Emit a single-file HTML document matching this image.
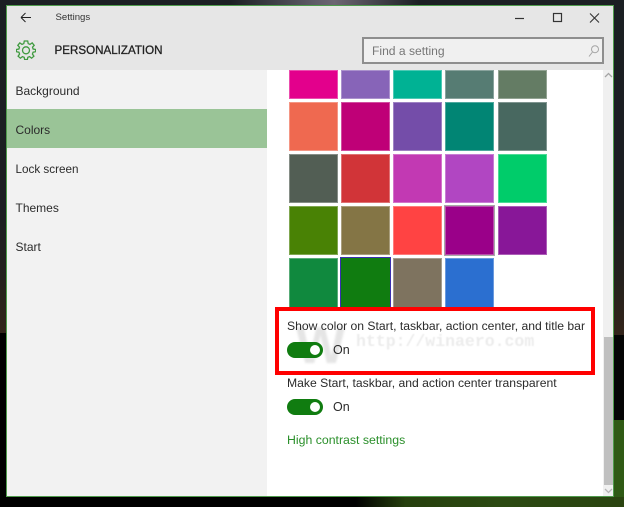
<!DOCTYPE html>
<html><head><meta charset="utf-8"><style>
*{box-sizing:border-box}
html,body{margin:0;padding:0}
body{width:624px;height:507px;position:relative;overflow:hidden;background:#000;font-family:"Liberation Sans",sans-serif;color:#2b2b2b}
.a{position:absolute;white-space:nowrap}
.t{position:absolute;white-space:nowrap;font-size:12.17px;line-height:16px;filter:blur(.25px)}
.s{position:absolute;width:49px;height:49px;box-shadow:inset 0 0 0 1px rgba(255,255,255,.3)}
.tg{position:absolute;left:287px;width:36px;height:16px;border-radius:8px;background:#107c10}
.tg i{position:absolute;left:23px;top:3px;width:10px;height:10px;border-radius:5px;background:#fff}
</style></head><body>
<div class="a" style="left:0;top:0;width:624px;height:340px;background:linear-gradient(180deg,#1b1f23 0,#1b1e21 210px,#25211d 280px,#33241a 335px,#33241a 340px)"></div>
<div class="a" style="left:230px;top:0;width:190px;height:5px;background:linear-gradient(90deg,#1b1f23,#5f5c68 45%,#6c6572 55%,#1b1f23)"></div>
<div class="a" style="left:0;top:333px;width:6px;height:174px;background:#000"></div>
<div class="a" style="left:614px;top:335px;width:10px;height:85px;background:#050505"></div>
<div class="a" style="left:614px;top:420px;width:10px;height:87px;background:#2f5a15"></div>
<div class="a" style="left:0;top:497px;width:624px;height:10px;background:linear-gradient(90deg,#000 57%,#263f0d 65%,#2c4a12 80%,#2a4410 100%)"></div>

<div class="a" style="left:6px;top:5px;width:608px;height:492px;background:#fff;border:1px solid #4f9b4c"></div>
<div class="a" style="left:7px;top:6px;width:606px;height:64px;background:#e6e6e6"></div>
<div class="a" style="left:7px;top:70px;width:260px;height:426px;background:#f2f2f2"></div>
<div class="a" style="left:7px;top:109px;width:260px;height:39px;background:#9ac497"></div>

<svg class="a" style="left:20px;top:11px" width="12" height="12" viewBox="0 0 12 12"><path d="M1 6.5H11M1 6.5L5.5 2M1 6.5L5.5 11" fill="none" stroke="#222" stroke-width="1"/></svg>
<div class="t" style="left:55.5px;top:10px;font-size:9.6px;color:#333">Settings</div>

<svg class="a" style="left:16px;top:40px" width="20" height="20" viewBox="0 0 20 20"><path d="M8.3 1H11.7L12.2 3.6L14 4.4L16.2 2.9L18.2 5.3L16.5 7.2L17.1 9L19.6 9.5V11.7L17.1 12.2L16.4 14L17.9 16.2L15.6 18.2L13.6 16.6L11.8 17.3L11.4 19.5H8.6L8.2 17.3L6.4 16.6L4.4 18.2L2.1 16.2L3.6 14L2.9 12.2L.4 11.7V9.5L2.9 9L3.5 7.2L1.8 5.3L3.8 2.9L6 4.4L7.8 3.6Z" fill="none" stroke="#3f9a3f" stroke-width="1.3"/><circle cx="10" cy="10.3" r="3.5" fill="none" stroke="#3f9a3f" stroke-width="1.3"/></svg>
<div class="t" style="left:54.5px;top:43px;font-size:11.6px;color:#222;-webkit-text-stroke:.3px #222">PERSONALIZATION</div>

<svg class="a" style="left:515px;top:11px" width="90" height="14" viewBox="0 0 90 14"><path d="M0 7.5H9" stroke="#333" stroke-width="1.2"/><rect x="38.5" y="2.5" width="8" height="8" fill="none" stroke="#333" stroke-width="1.2"/><path d="M75 2.5L84 11.5M84 2.5L75 11.5" stroke="#333" stroke-width="1.1"/></svg>

<div class="a" style="left:362px;top:37px;width:242px;height:27px;background:#f0f0f0;border:2px solid #8e8e8e"></div>
<div class="t" style="left:372px;top:42.5px;font-size:12.1px;color:#777">Find a setting</div>
<svg class="a" style="left:586px;top:44px" width="14" height="14" viewBox="0 0 14 14"><circle cx="9" cy="5.2" r="3.5" fill="none" stroke="#a5a5a5" stroke-width="1"/><path d="M6.5 8L3 12.5" stroke="#a5a5a5" stroke-width="1"/></svg>

<div class="t" style="left:15.5px;top:82.5px;font-size:12px">Background</div>
<div class="t" style="left:15.5px;top:121.5px;font-size:12px">Colors</div>
<div class="t" style="left:15.5px;top:162px;font-size:11.7px">Lock screen</div>
<div class="t" style="left:15.5px;top:200px;font-size:12px">Themes</div>
<div class="t" style="left:15.5px;top:239px;font-size:12px">Start</div>

<div class="s" style="left:289px;top:70px;height:29px;background:#e3008c"></div>
<div class="s" style="left:341px;top:70px;height:29px;background:#8764b8"></div>
<div class="s" style="left:393px;top:70px;height:29px;background:#00b294"></div>
<div class="s" style="left:445px;top:70px;height:29px;background:#567c73"></div>
<div class="s" style="left:498px;top:70px;height:29px;background:#647c64"></div>

<div class="s" style="left:289px;top:102px;background:#ef6950"></div>
<div class="s" style="left:341px;top:102px;background:#bf0077"></div>
<div class="s" style="left:393px;top:102px;background:#744da9"></div>
<div class="s" style="left:445px;top:102px;background:#018574"></div>
<div class="s" style="left:498px;top:102px;background:#486860"></div>

<div class="s" style="left:289px;top:154px;background:#525e54"></div>
<div class="s" style="left:341px;top:154px;background:#d13438"></div>
<div class="s" style="left:393px;top:154px;background:#c239b3"></div>
<div class="s" style="left:445px;top:154px;background:#b146c2"></div>
<div class="s" style="left:498px;top:154px;background:#00cc6a"></div>

<div class="s" style="left:289px;top:206px;background:#498205"></div>
<div class="s" style="left:341px;top:206px;background:#847545"></div>
<div class="s" style="left:393px;top:206px;background:#ff4343"></div>
<div class="s" style="left:445px;top:206px;background:#9a0089"></div>
<div class="s" style="left:498px;top:206px;background:#881798"></div>
<div class="a" style="left:444px;top:205px;width:51px;height:51px;border:1px solid #a8a8a8"></div>

<div class="s" style="left:289px;top:258px;height:50px;background:#10893e"></div>
<div class="s" style="left:340px;top:257px;width:51px;height:51px;background:#107c10;box-shadow:none;border:1px solid #3a2fb0"></div>
<div class="s" style="left:393px;top:258px;height:50px;background:#7e735f"></div>
<div class="s" style="left:445px;top:258px;height:50px;background:#2b6fd0"></div>

<div class="a" style="left:296px;top:318px;width:60px;font:700 52px/56px 'Liberation Sans',sans-serif;color:rgba(170,170,170,.3);filter:blur(1px)">W</div>
<div class="a" style="left:356px;top:331px;font:700 16.5px/22px 'Liberation Mono',monospace;color:rgba(170,170,170,.22);filter:blur(.6px)">http://winaero.com</div>

<div class="a" style="left:275px;top:307px;width:320px;height:68px;border:4.5px solid #f00"></div>
<div class="t" style="left:287px;top:318px">Show color on Start, taskbar, action center, and title bar</div>
<div class="tg" style="top:342px"><i></i></div>
<div class="t" style="left:333px;top:342px;font-size:12.5px">On</div>
<div class="t" style="left:287px;top:375px">Make Start, taskbar, and action center transparent</div>
<div class="tg" style="top:399px"><i></i></div>
<div class="t" style="left:333px;top:399px;font-size:12.5px">On</div>
<div class="t" style="left:287px;top:432px;font-size:12.3px;color:#2a8f2a">High contrast settings</div>

<div class="a" style="left:603px;top:70px;width:10px;height:426px;background:#f0f0f0"></div>
<div class="a" style="left:604px;top:337px;width:9px;height:148px;background:#c0c0c0"></div>
<svg class="a" style="left:604px;top:72px" width="9" height="6" viewBox="0 0 9 6"><path d="M1 5L4.5 1.5L8 5" fill="none" stroke="#a5a5a5" stroke-width="1.3"/></svg>
<svg class="a" style="left:604px;top:488px" width="9" height="6" viewBox="0 0 9 6"><path d="M1 1L4.5 4.5L8 1" fill="none" stroke="#b5b5b5" stroke-width="1.3"/></svg>
</body></html>
